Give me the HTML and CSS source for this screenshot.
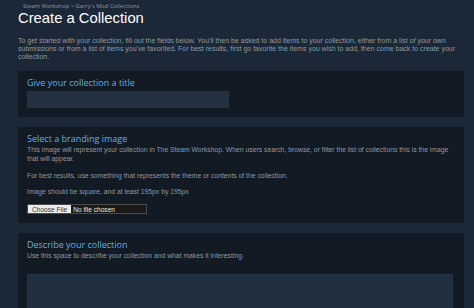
FILE: index.html
```html
<!DOCTYPE html>
<html lang="en">
<head>
<meta charset="utf-8">
<title>Create a Collection</title>
<link rel="stylesheet" href="styles.css">
</head>
<body>
<div class="page">
  <div class="breadcrumbs"><a href="#">Steam Workshop</a> &gt; <a href="#">Garry's Mod Collections</a></div>
  <h1 class="title">Create a Collection</h1>
  <p class="intro">To get started with your collection, fill out the fields below. You'll then be asked to add items to your collection, either from a list of your own submissions or from a list of items you've favorited. For best results, first go favorite the items you wish to add, then come back to create your collection.</p>

  <section class="panel">
    <h2 class="panel-title">Give your collection a title</h2>
    <input class="title-input" type="text">
  </section>

  <section class="panel">
    <h2 class="panel-title">Select a branding image</h2>
    <p class="panel-text">This image will represent your collection in The Steam Workshop. When users search, browse, or filter the list of collections this is the image that will appear.<br><br>For best results, use something that represents the theme or contents of the collection.<br><br>Image should be square, and at least 195px by 195px</p>
    <div class="file-input">
      <span class="file-button">Choose File</span>
      <span class="file-name">No file chosen</span>
    </div>
  </section>

  <section class="panel">
    <h2 class="panel-title">Describe your collection</h2>
    <p class="panel-text">Use this space to describe your collection and what makes it interesting.</p>
    <textarea class="desc-input"></textarea>
  </section>
</div>
</body>
</html>
```
FILE: styles.css
```css
html, body {
  margin: 0;
  padding: 0;
  background: #1b2838;
  overflow: hidden;
}

.page {
  width: 446px;
  padding: 3px 0 0 18px;
  font-family: "Liberation Sans", Arial, sans-serif;
}

.breadcrumbs {
  font-family: "Open Sans", sans-serif;
  font-size: 5.8px;
  line-height: 7px;
  color: #8f98a0;
  padding-left: 5px;
}

.breadcrumbs a {
  color: #8f98a0;
  text-decoration: none;
}

.title {
  margin: 0;
  font-size: 14.8px;
  line-height: 17px;
  font-weight: normal;
  color: #ffffff;
}

.intro {
  margin: 10px 0 11px 0;
  font-size: 7px;
  line-height: 7.8px;
  color: #8f98a0;
}

.panel {
  background: #121a24;
  padding: 7px 8px 9px 9px;
  margin-bottom: 10px;
}

.panel-title {
  margin: 0;
  font-family: "Open Sans", sans-serif;
  font-weight: normal;
  font-size: 9px;
  line-height: 10px;
  color: #62aee0;
}

.title-input {
  display: block;
  box-sizing: border-box;
  margin: 3px 0 0 0;
  width: 202px;
  height: 17px;
  border: none;
  border-radius: 1px;
  background: #243140;
  outline: none;
  padding: 0;
}

.panel-text {
  margin: 2px 0 0 0;
  font-size: 6.8px;
  line-height: 8.4px;
  color: #8f98a0;
}

.file-input {
  display: flex;
  align-items: center;
  box-sizing: border-box;
  width: 120px;
  height: 10px;
  margin-top: 7.5px;
  border: 1px solid #4a4a4a;
  background: #191919;
  font-size: 6.6px;
}

.file-button {
  display: flex;
  align-items: center;
  height: 100%;
  padding: 0 4px;
  background: #ececec;
  color: #333333;
}

.file-name {
  padding-left: 2px;
  color: #e8e8e8;
}

.desc-input {
  display: block;
  box-sizing: border-box;
  margin: 13px 0 0 0;
  width: 426px;
  height: 80px;
  border: none;
  background: #213041;
  resize: none;
  outline: none;
}
```
